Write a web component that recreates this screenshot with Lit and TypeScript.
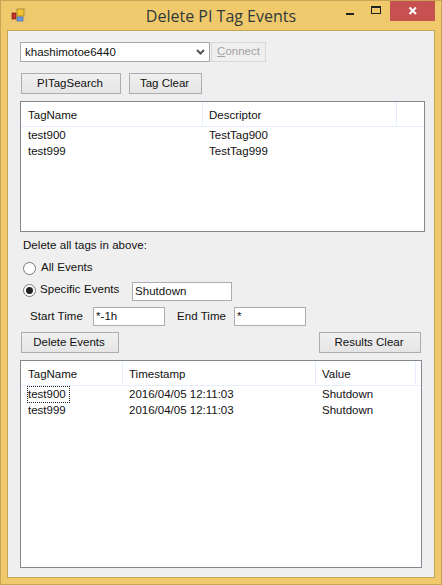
import { LitElement, html, css, svg } from "lit";
import { customElement } from "lit/decorators.js";

@customElement("app-root")
export class AppRoot extends LitElement {
  static styles = css`
    :host { display: block; width: 442px; height: 585px; box-sizing: border-box; background: #f0c96c; border: 1px solid #c6a654; font-family: "Liberation Sans", Arial, sans-serif; font-size: 11.5px; color: #111; overflow: hidden; }
    .titlebar { height: 29px; display: flex; align-items: flex-start; position: relative; }
    .appicon { margin: 7px 0 0 10px; width: 15px; height: 15px; flex: none; }
    .title { position: absolute; left: 0; right: 0; top: 5px; text-align: center; font: 16px/20px "Open Sans", "Noto Sans", sans-serif; color: #2f3a3a; }
    .caption { margin-left: auto; display: flex; align-items: flex-start; margin-right: 6px; }
    .capbtn { width: 26px; height: 20px; display: flex; align-items: center; justify-content: center; }
    .close { width: 45px; background: #c75050; margin-left: 1px; }
    .client { box-sizing: border-box; margin: 0 6px 0 6px; height: 548px; background: #efefef; border: 1px solid #c6a654; padding: 11px 0 0 12px; display: flex; flex-direction: column; align-items: flex-start; }
    .row { display: flex; align-items: center; }
    .combo { box-sizing: border-box; width: 190px; height: 20px; background: #fff; border: 1px solid #a9a9a9; display: flex; align-items: center; padding-left: 4px; }
    .combo svg { margin-left: auto; margin-right: 4px; }
    .connect { box-sizing: border-box; width: 55px; height: 20px; margin-left: 1px; border: 1px solid #d9d9d9; background: #efefef; color: #a3a3a3; text-align: center; line-height: 16px; }
    button { box-sizing: border-box; height: 21px; padding: 0 2px 2px 0; font: inherit; color: #111; border: 1px solid #adadad; background: linear-gradient(#f0f0f0, #e5e5e5); }
    .list { box-sizing: border-box; background: #fff; border: 1px solid #828790; }
    .head { display: flex; height: 25px; border-bottom: 1px solid #e5eefa; align-items: center; box-sizing: border-box; }
    .head > div { box-sizing: border-box; height: 100%; padding: 0 0 0 6px; line-height: 26px; border-right: 1px solid #e5eefa; flex: none; }
    .head > div:first-child { padding-left: 7px; }
    .head > div:last-child { border-right: 0; flex: 1; }
    .lrow { display: flex; height: 16px; line-height: 16px; }
    .lrow > span { box-sizing: border-box; flex: none; padding-left: 6px; }
    .lrow > span:first-child { padding-left: 7px; }
    .focus { display: inline-block; outline: 1px dotted #222; padding: 0 3px 0 0; margin-right: -3px; line-height: 15px; }
    .text { letter-spacing: .05px; }
    .radio { width: 13px; height: 13px; box-sizing: border-box; border-radius: 50%; border: 1px solid #7a7a7a; background: #fff; flex: none; display: flex; align-items: center; justify-content: center; }
    .radio i { width: 7px; height: 7px; border-radius: 50%; background: #222; }
    .input { box-sizing: border-box; height: 19px; background: #fff; border: 1px solid #abadb3; line-height: 16px; padding-left: 2px; }
    .lift { margin-bottom: 3px; }
    .gap-search { margin-top: 11px; }
    .label { margin: 6px 0 0 3px; line-height: 14px; }
    .r-all { margin: 8px 0 0 3px; height: 16px; }
    .r-spec { margin: 6px 0 0 3px; height: 19px; }
    .r-time { margin: 6px 0 0 10px; height: 19px; }
    .r-act { margin-top: 6px; width: 401px; justify-content: space-between; padding-left: 1px; box-sizing: border-box; }
    .list1 { width: 405px; height: 131px; margin-top: 7px; }
    .list2 { width: 402px; height: 208px; margin-top: 7px; }
    .b-search { width: 100px; margin-left: 1px; }
    .b-clear { width: 73px; margin-left: 8px; }
    .b-del { width: 98px; }
    .b-res { width: 102px; }
    .ml5 { margin-left: 5px; margin-bottom: 2px; }
    .specl { margin-left: 4px; width: 92px; margin-bottom: 5px; }
    .i-ev { width: 100px; }
    .i-t { width: 72px; }
    .startl { width: 63px; margin-bottom: 2px; }
    .endl { margin-left: 12px; width: 57px; margin-bottom: 2px; }
  `;

  private cols1 = [182, 194, 27];
  private cols2 = [102, 193, 100, 5];

  private icon() {
    return svg`<svg class="appicon" viewBox="0 0 15 15">
      <rect x="0" y="0" width="15" height="15" fill="none" stroke="#a8a8a8" stroke-width=".5" stroke-dasharray="1 1"/>
      <rect x="6" y="1" width="7" height="7" fill="#f2c230" stroke="#9a7a20" stroke-width=".7"/>
      <rect x="1" y="5" width="4" height="6" fill="#c8302c" stroke="#7a2020" stroke-width=".7"/>
      <rect x="6" y="9" width="6" height="4" fill="#6a9ae0" stroke="#4a6aa8" stroke-width=".7"/>
    </svg>`;
  }

  render() {
    return html`
      <div class="titlebar">
        ${this.icon()}
        <div class="title">Delete PI Tag Events</div>
        <div class="caption">
          <div class="capbtn"><svg width="10" height="10" viewBox="0 0 10 10"><rect x="1" y="7" width="8" height="2" fill="#222"/></svg></div>
          <div class="capbtn"><svg width="11" height="10" viewBox="0 0 11 10"><rect x=".5" y=".5" width="9" height="7" fill="none" stroke="#222"/><rect x="0" y="0" width="10" height="2" fill="#222"/></svg></div>
          <div class="capbtn close"><svg width="10" height="10" viewBox="0 0 10 10"><path d="M1.5 1.5 8 8M8 1.5 1.5 8" stroke="#fff" stroke-width="2"/></svg></div>
        </div>
      </div>
      <div class="client">
        <div class="row">
          <div class="combo">khashimotoe6440<svg width="9" height="6" viewBox="0 0 9 6"><path d="M1 1l3.5 3.5L8 1" fill="none" stroke="#555" stroke-width="2"/></svg></div>
          <div class="connect"><u>C</u>onnect</div>
        </div>
        <div class="row gap-search">
          <button class="b-search">PITagSearch</button>
          <button class="b-clear">Tag Clear</button>
        </div>
        <div class="list list1">
          <div class="head"><div style="width:${this.cols1[0]}px">TagName</div><div style="width:${this.cols1[1]}px">Descriptor</div><div></div></div>
          <div class="rows">
            <div class="lrow"><span style="width:${this.cols1[0]}px">test900</span><span>TestTag900</span></div>
            <div class="lrow"><span style="width:${this.cols1[0]}px">test999</span><span>TestTag999</span></div>
          </div>
        </div>
        <div class="text label">Delete all tags in above:</div>
        <div class="row text r-all"><div class="radio"></div><span class="ml5">All Events</span></div>
        <div class="row text r-spec"><div class="radio lift"><i></i></div><span class="specl">Specific Events</span><div class="input i-ev">Shutdown</div></div>
        <div class="row text r-time"><span class="startl">Start Time</span><div class="input i-t">*-1h</div><span class="endl">End Time</span><div class="input i-t">*</div></div>
        <div class="row r-act">
          <button class="b-del">Delete Events</button>
          <button class="b-res">Results Clear</button>
        </div>
        <div class="list list2">
          <div class="head"><div style="width:${this.cols2[0]}px">TagName</div><div style="width:${this.cols2[1]}px">Timestamp</div><div style="width:${this.cols2[2]}px">Value</div><div></div></div>
          <div class="rows">
            <div class="lrow"><span style="width:${this.cols2[0]}px"><span class="focus">test900</span></span><span style="width:${this.cols2[1]}px">2016/04/05 12:11:03</span><span>Shutdown</span></div>
            <div class="lrow"><span style="width:${this.cols2[0]}px">test999</span><span style="width:${this.cols2[1]}px">2016/04/05 12:11:03</span><span>Shutdown</span></div>
          </div>
        </div>
      </div>
    `;
  }
}
